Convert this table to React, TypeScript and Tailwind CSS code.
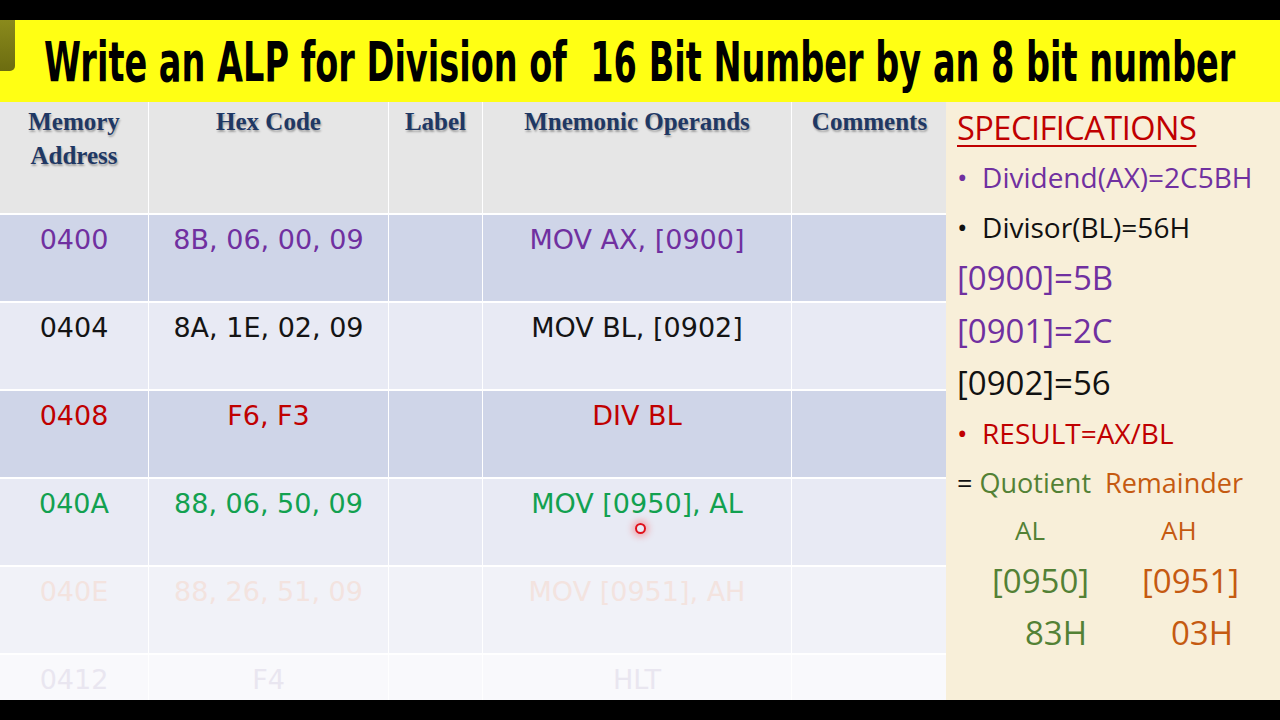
import React from 'react';

type Row = {
  addr: string;
  hex: string;
  mnem: string;
  bg: string;
  color: string;
};

const rows: Row[] = [
  { addr: '0400', hex: '8B, 06, 00, 09', mnem: 'MOV AX, [0900]', bg: 'bg-[#cfd5e8]', color: 'text-[#7030a0]' },
  { addr: '0404', hex: '8A, 1E, 02, 09', mnem: 'MOV BL, [0902]', bg: 'bg-[#e8eaf4]', color: 'text-[#141414]' },
  { addr: '0408', hex: 'F6, F3', mnem: 'DIV BL', bg: 'bg-[#cfd5e8]', color: 'text-[#c00000]' },
  { addr: '040A', hex: '88, 06, 50, 09', mnem: 'MOV [0950], AL', bg: 'bg-[#e8eaf4]', color: 'text-[#12a150]' },
  { addr: '040E', hex: '88, 26, 51, 09', mnem: 'MOV [0951], AH', bg: 'bg-[#f1f2f8]', color: 'text-[#f3e3df]' },
  { addr: '0412', hex: 'F4', mnem: 'HLT', bg: 'bg-[#f9f9fc]', color: 'text-[#e9e6f0]' },
];

const headFont = "font-['Liberation_Serif',serif] font-bold text-[25px] leading-[34px] text-[#1f3864] [text-shadow:1px_2px_2px_rgba(0,0,0,0.3)]";
const cellFont = "font-['DejaVu_Sans',sans-serif] text-[27px] leading-[32px]";

function Cell({ children, bg, color }: { children?: React.ReactNode; bg: string; color: string }) {
  return (
    <div className={`${bg} ${color} ${cellFont} flex justify-center pt-[9px] h-[86px]`}>
      {children}
    </div>
  );
}

function Table() {
  return (
    <div className="w-[946px] bg-white grid grid-cols-[148px_239px_93px_308px_155px] gap-x-px gap-y-[2px] content-start">
      <div className={`bg-[#e6e6e6] h-[111px] text-center pt-[3px] ${headFont}`}>Memory<br />Address</div>
      <div className={`bg-[#e6e6e6] text-center pt-[3px] ${headFont}`}>Hex Code</div>
      <div className={`bg-[#e6e6e6] text-center pt-[3px] ${headFont}`}>Label</div>
      <div className={`bg-[#e6e6e6] text-center pt-[3px] ${headFont}`}>Mnemonic Operands</div>
      <div className={`bg-[#e6e6e6] text-center pt-[3px] ${headFont}`}>Comments</div>
      {rows.map((r) => (
        <React.Fragment key={r.addr}>
          <Cell bg={r.bg} color={r.color}>{r.addr}</Cell>
          <Cell bg={r.bg} color={r.color}>{r.hex}</Cell>
          <Cell bg={r.bg} color={r.color} />
          <Cell bg={r.bg} color={r.color}>{r.mnem}</Cell>
          <Cell bg={r.bg} color={r.color} />
        </React.Fragment>
      ))}
    </div>
  );
}

function Specs() {
  return (
    <div className="flex-1 bg-[#f8efd9] pl-[11px] font-['Open_Sans',sans-serif]">
      <div className="text-[32.5px] leading-[51px] text-[#c00000] underline decoration-[2px] underline-offset-[5px] tracking-[-0.5px]">SPECIFICATIONS</div>
      <div className="text-[28px] leading-[49.5px] text-[#7030a0]">•&nbsp; Dividend(AX)=2C5BH</div>
      <div className="text-[28px] leading-[48px] text-[#111]">•&nbsp; Divisor(BL)=56H</div>
      <div className="text-[33px] leading-[53px] text-[#7030a0]">[0900]=5B</div>
      <div className="text-[33px] leading-[53px] text-[#7030a0]">[0901]=2C</div>
      <div className="text-[33px] leading-[52.5px] text-[#111]">[0902]=56</div>
      <div className="text-[28px] leading-[49.5px] text-[#c00000]">•&nbsp; RESULT=AX/BL</div>
      <div className="text-[27px] leading-[47.5px]">
        <span className="text-[#111]">= </span>
        <span className="text-[#538135]">Quotient</span>
        <span className="text-[#c55a11] ml-[14px]">Remainder</span>
      </div>
      <div className="flex text-[26px] leading-[49px]">
        <span className="w-[204px] pl-[58px] text-[#538135]">AL</span>
        <span className="text-[#c55a11]">AH</span>
      </div>
      <div className="flex text-[33px] leading-[52px]">
        <span className="w-[185px] pl-[35px] text-[#538135]">[0950]</span>
        <span className="text-[#c55a11]">[0951]</span>
      </div>
      <div className="flex text-[33px] leading-[52px]">
        <span className="w-[214px] pl-[68px] text-[#538135]">83H</span>
        <span className="text-[#c55a11]">03H</span>
      </div>
    </div>
  );
}

export default function App() {
  return (
    <div className="w-[1280px] h-[720px] bg-black flex flex-col overflow-hidden">
      <div className="h-[20px]" />
      <div className="relative h-[82px] bg-[#ffff14] flex items-center overflow-hidden">
        <div className="absolute left-0 top-0 w-[15px] h-[51px] rounded-br-[5px] bg-gradient-to-b from-[#8a8a1c] to-[#6c6c10]" />
        <div className="ml-[44px] pt-[3px] inline-block font-['DejaVu_Sans_Condensed','DejaVu_Sans',sans-serif] font-bold text-[55px] leading-none text-black whitespace-pre origin-left scale-x-[0.678]">
          Write an ALP for Division of  16 Bit Number by an 8 bit number
        </div>
      </div>
      <div className="flex h-[598px] overflow-hidden relative">
        <Table />
        <Specs />
        <div className="absolute left-[635px] top-[421px] w-[11px] h-[11px] rounded-full border-[2px] border-[#e0101a] shadow-[0_0_6px_3px_rgba(255,60,60,0.35)]" />
      </div>
      <div className="h-[20px]" />
    </div>
  );
}
